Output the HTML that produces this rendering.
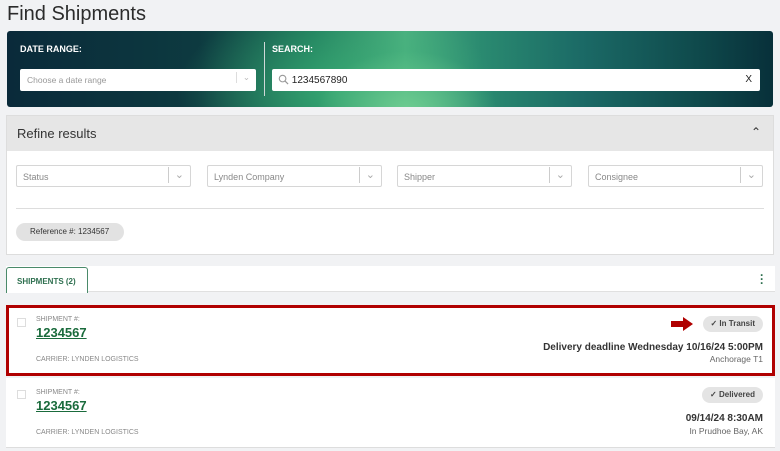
<!DOCTYPE html>
<html><head><style>
*{box-sizing:border-box;margin:0;padding:0}
body{width:780px;height:451px;background:#f1f2f4;font-family:"Liberation Sans",sans-serif;position:relative;overflow:hidden;color:#333}
.abs{position:absolute}
h1{position:absolute;left:7px;top:3px;font-size:20px;font-weight:normal;color:#2b2b2b}
.banner{left:7px;top:31px;width:766px;height:76px;border-radius:3px;
background:radial-gradient(ellipse 90px 60px at 400px 80px,rgba(120,210,150,.8),transparent),
radial-gradient(ellipse 160px 90px at 330px 60px,rgba(60,180,120,.7),transparent),
linear-gradient(90deg,#0a2a3a 0%,#0d3a40 25%,#1f7a5c 40%,#4cb080 52%,#2a8a70 62%,#1b6a66 75%,#0f4a4c 90%,#08303a 100%)}
.lbl{color:#fff;font-size:9px;font-weight:bold}
.inp{background:#fff;border-radius:2px;height:22px;font-size:10px}
.panel{left:6px;top:115px;width:768px;height:140px;background:#fff;border:1px solid #ddd}
.ph{height:35px;background:#e6e6e6;font-size:13px;padding:10px 10px;color:#333}
.sel{top:165px;width:175px;height:22px;border:1px solid #d6d6d6;border-radius:2px;font-size:9px;color:#888;padding:6px 6px}
.sel:after{content:"⌄";position:absolute;right:6px;top:1px;color:#aaa;font-size:11px;border-left:1px solid #ccc;padding-left:6px;line-height:16px}
.card{left:6px;width:769px;background:#fff}
.small{font-size:7px;color:#888}
.num{font-size:13px;font-weight:bold;color:#1a6b3c;text-decoration:underline}
.pill{background:#e4e4e4;border-radius:9px;font-size:8px;font-weight:bold;color:#444;height:16px;padding:3px 8px}
</style></head><body>
<h1>Find Shipments</h1>
<div class="abs banner"></div>
<div class="abs lbl" style="left:20px;top:44px">DATE RANGE:</div>
<div class="abs lbl" style="left:272px;top:44px">SEARCH:</div>
<div class="abs" style="left:264px;top:42px;width:1px;height:54px;background:#cfd8d8"></div>
<div class="abs inp" style="left:20px;top:69px;width:236px;color:#999;font-size:8.5px;padding:6px 7px">Choose a date range<span style="position:absolute;right:6px;top:3px;color:#bbb;border-left:1px solid #ddd;padding-left:6px">⌄</span></div>
<div class="abs inp" style="left:272px;top:69px;width:488px;color:#222;padding:5px 6px"><svg width="11" height="11" viewBox="0 0 12 12" style="vertical-align:-2px"><circle cx="5" cy="5" r="3.6" fill="none" stroke="#999" stroke-width="1.2"/><path d="M7.7 7.7L11 11" stroke="#999" stroke-width="1.3"/></svg> 1234567890<span style="position:absolute;right:8px;top:5px;font-size:10px">X</span></div>
<div class="abs panel"><div class="ph">Refine results<span style="position:absolute;right:12px;top:9px;font-size:12px">⌃</span></div></div>
<div class="abs sel" style="left:16px">Status</div>
<div class="abs sel" style="left:207px">Lynden Company</div>
<div class="abs sel" style="left:397px">Shipper</div>
<div class="abs sel" style="left:588px">Consignee</div>
<div class="abs" style="left:16px;top:208px;width:748px;height:1px;background:#ddd"></div>
<div class="abs" style="left:16px;top:223px;width:108px;height:18px;border-radius:9px;background:#e2e2e2;font-size:8px;color:#333;padding:4px 14px">Reference #: 1234567</div>
<div class="abs" style="left:6px;top:266px;width:769px;height:26px;background:#fff;border-bottom:1px solid #e0e0e0"></div>
<div class="abs" style="left:6px;top:267px;width:82px;height:26px;border:1px solid #4a8a6a;border-bottom:none;border-radius:3px 3px 0 0;background:#fff;font-size:8px;font-weight:bold;color:#2f7050;padding:9px 10px">SHIPMENTS (2)</div>
<div class="abs" style="left:760px;top:273px;color:#2f7050;font-size:12px;font-weight:bold;line-height:4px">·<br>·<br>·</div>
<div class="abs card" style="top:305px;height:71px;border:3px solid #b00000"></div>
<div class="abs card" style="top:378px;height:70px;border-bottom:1px solid #ddd"></div>
<div class="abs" style="left:17px;top:318px;width:9px;height:9px;border:1px solid #ddd"></div>
<div class="abs" style="left:17px;top:390px;width:9px;height:9px;border:1px solid #ddd"></div>
<div class="abs small" style="left:36px;top:316px">SHIPMENT #:</div>
<div class="abs num" style="left:36px;top:325px">1234567</div>
<div class="abs small" style="left:36px;top:356px">CARRIER: LYNDEN LOGISTICS</div>
<div class="abs small" style="left:36px;top:389px">SHIPMENT #:</div>
<div class="abs num" style="left:36px;top:398px">1234567</div>
<div class="abs small" style="left:36px;top:429px">CARRIER: LYNDEN LOGISTICS</div>
<svg class="abs" style="left:671px;top:317px" width="22" height="14" viewBox="0 0 22 14"><path d="M0 4H12V0L22 7L12 14V10H0Z" fill="#b00000"/></svg>
<div class="abs pill" style="right:17px;top:316px">✓ In Transit</div>
<div class="abs" style="right:17px;top:342px;font-size:10px;font-weight:bold;color:#333">Delivery deadline Wednesday 10/16/24 5:00PM</div>
<div class="abs" style="right:17px;top:354px;font-size:8.5px;color:#666">Anchorage T1</div>
<div class="abs pill" style="right:17px;top:387px">✓ Delivered</div>
<div class="abs" style="right:17px;top:413px;font-size:10px;font-weight:bold;color:#333">09/14/24 8:30AM</div>
<div class="abs" style="right:17px;top:426px;font-size:8.5px;color:#666">In Prudhoe Bay, AK</div>
</body></html>
